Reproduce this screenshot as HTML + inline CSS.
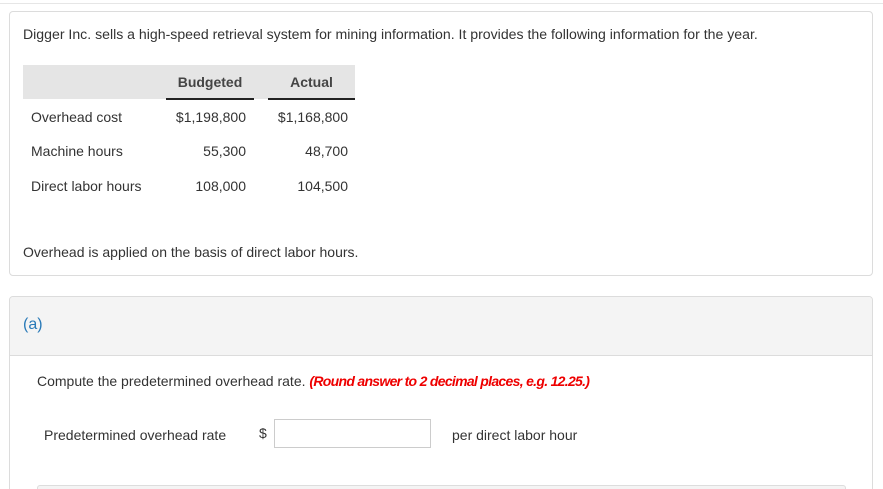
<!DOCTYPE html>
<html style="overflow:hidden"><head><style>
html,body{margin:0;width:883px;height:489px;overflow:hidden}
body{background:#fff;font-family:"Liberation Sans",sans-serif;color:#333;position:relative}
.a{position:absolute;white-space:nowrap;font-size:14px}
.card{position:absolute;border:1px solid #dcdcdc;border-radius:4px;background:#fff}
</style></head><body>
<div style="position:absolute;left:0;top:3px;width:883px;height:1px;background:#e6e6e6"></div>
<div class="card" style="left:9px;top:11px;width:862px;height:263px"></div>
<div class="a" style="left:23px;top:26px;font-size:14.1px">Digger Inc. sells a high-speed retrieval system for mining information. It provides the following information for the year.</div>
<div style="position:absolute;left:23px;top:65px;width:332px;height:34px;background:#e5e5e5"></div>
<div style="position:absolute;left:166px;top:98px;width:88px;height:2px;background:#222"></div>
<div style="position:absolute;left:268px;top:98px;width:87px;height:2px;background:#222"></div>
<div class="a" style="left:166px;width:88px;text-align:center;top:74px;font-weight:bold;color:#444">Budgeted</div>
<div class="a" style="left:268px;width:87px;text-align:center;top:74px;font-weight:bold;color:#444">Actual</div>
<div class="a" style="left:31px;top:109px">Overhead cost</div>
<div class="a" style="left:31px;top:143px">Machine hours</div>
<div class="a" style="left:31px;top:178px">Direct labor hours</div>
<div class="a" style="right:637px;top:109px">$1,198,800</div>
<div class="a" style="right:637px;top:143px">55,300</div>
<div class="a" style="right:637px;top:178px">108,000</div>
<div class="a" style="right:535px;top:109px">$1,168,800</div>
<div class="a" style="right:535px;top:143px">48,700</div>
<div class="a" style="right:535px;top:178px">104,500</div>
<div class="a" style="left:23px;top:244px">Overhead is applied on the basis of direct labor hours.</div>

<div class="card" style="left:9px;top:296px;width:862px;height:200px;overflow:hidden">
<div style="height:58px;background:#f4f4f4;border-bottom:1px solid #dcdcdc"></div></div>
<div class="a" style="left:23px;top:316px;font-size:16px;color:#2a7ab8">(a)</div>
<div class="a" style="left:37px;top:373px">Compute the predetermined overhead rate. <span style="color:#e00;font-weight:bold;font-style:italic;letter-spacing:-0.7px">(Round answer to 2 decimal places, e.g. 12.25.)</span></div>
<div class="a" style="left:44px;top:427px">Predetermined overhead rate</div>
<div class="a" style="left:259px;top:425px">$</div>
<div style="position:absolute;left:274px;top:419px;width:155px;height:27px;border:1px solid #ccc"></div>
<div class="a" style="left:452px;top:427px">per direct labor hour</div>
<div style="position:absolute;left:37px;top:485px;width:807px;height:10px;border:1px solid #ddd;background:#f4f4f4;border-radius:3px"></div>
</body></html>
